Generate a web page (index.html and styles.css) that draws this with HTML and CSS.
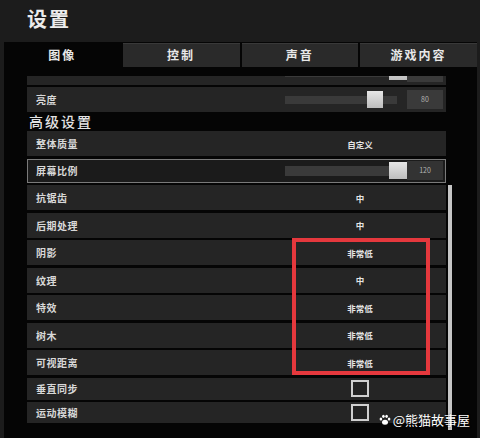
FILE: index.html
```html
<!DOCTYPE html>
<html lang="zh-CN">
<head>
    <meta charset="UTF-8">
    <meta name="viewport" content="width=device-width, initial-scale=1.0">
    <title>设置 - 图像</title>
    <link rel="stylesheet" href="styles.css">
</head>
<body>
    <header class="topbar">
        <h1>设置</h1>
    </header>
    <div class="main">
        <nav class="tabs">
            <div class="tab active">图像</div>
            <div class="tab">控制</div>
            <div class="tab">声音</div>
            <div class="tab">游戏内容</div>
        </nav>
        <div class="content">
            <div class="panel">
                <div class="list">
                    <!-- 위로 스크롤되어 잘린 행 -->
                    <div class="row">
                        <span class="label"></span>
                        <span class="slider full"><i class="knob" style="left:104px"></i></span>
                        <span class="box"></span>
                    </div>
                    <div class="row tight">
                        <span class="label">亮度</span>
                        <span class="slider"><i class="knob" style="left:82px"></i></span>
                        <span class="box gap">80</span>
                    </div>
                    <div class="section">高级设置</div>
                    <div class="row">
                        <span class="label">整体质量</span>
                        <span class="val">自定义</span>
                    </div>
                    <div class="row hl">
                        <span class="label">屏幕比例</span>
                        <span class="slider full"><i class="knob" style="left:104px"></i></span>
                        <span class="box">120</span>
                    </div>
                    <div class="row">
                        <span class="label">抗锯齿</span>
                        <span class="val">中</span>
                    </div>
                    <div class="row">
                        <span class="label">后期处理</span>
                        <span class="val">中</span>
                    </div>
                    <div class="row">
                        <span class="label">阴影</span>
                        <span class="val">非常低</span>
                    </div>
                    <div class="row">
                        <span class="label">纹理</span>
                        <span class="val">中</span>
                    </div>
                    <div class="row">
                        <span class="label">特效</span>
                        <span class="val">非常低</span>
                    </div>
                    <div class="row">
                        <span class="label">树木</span>
                        <span class="val">非常低</span>
                    </div>
                    <div class="row">
                        <span class="label">可视距离</span>
                        <span class="val">非常低</span>
                    </div>
                    <div class="row small">
                        <span class="label">垂直同步</span>
                        <span class="val"><i class="check"></i></span>
                    </div>
                    <div class="row small last">
                        <span class="label">运动模糊</span>
                        <span class="val"><i class="check"></i></span>
                    </div>
                </div>
                <div class="mark"></div>
            </div>
            <div class="scrollbar"></div>
        </div>
    </div>
    <div class="watermark">
        <svg class="paw" width="12" height="12" viewBox="0 0 24 24" fill="#fff">
            <ellipse cx="12" cy="16.5" rx="6" ry="5"/>
            <ellipse cx="3.8" cy="10" rx="2.6" ry="3"/>
            <ellipse cx="8.8" cy="4.6" rx="2.6" ry="3.2"/>
            <ellipse cx="15.2" cy="4.6" rx="2.6" ry="3.2"/>
            <ellipse cx="20.2" cy="10" rx="2.6" ry="3"/>
        </svg>
        <span>@熊猫故事屋</span>
    </div>
</body>
</html>
```

FILE: styles.css
```css
* {margin:0; padding:0; box-sizing:border-box;}
html, body {width:480px; height:438px; overflow:hidden;}
body {
    background:#1c1c1c; color:#ddd; position:relative;
    font-family:"Noto Sans CJK SC", "Noto Sans", sans-serif;
}
.topbar {height:42px; padding:6px 0 0 27px;}
.topbar h1 {font-size:20px; line-height:26px; font-weight:700; letter-spacing:2px; color:#ececec;}

.main {margin:0 3px 0 4px; height:396px; background:#050505;}
.tabs {display:grid; grid-template-columns:repeat(4, 1fr); gap:2px; height:25px; padding-top:1px;}
.tab {
    background:#2a2a2a; border-top:1px solid #393939; text-align:center;
    font-size:12px; line-height:22px; font-weight:700; letter-spacing:2px; color:#e8e8e8;
}
.tab.active {background:transparent; border-color:transparent;}

.content {display:flex; gap:2px; margin-top:9px; padding-left:23px; height:354px;}
.panel {position:relative; width:419px; height:354px; overflow:hidden;}
.list {margin-top:-16.5px;}

.row {
    display:flex; align-items:center; height:25px; margin-bottom:2.5px;
    padding-left:9px; background:#252525;
}
.row.tight {margin-bottom:0;}
.row.small {height:22px;}
.row.small.last {height:21px;}
.row.hl {height:24px; border:1px solid #7a7a7a; padding-left:8px; background:#1b1b1b;}
.row .label {flex:1; font-size:10px; font-weight:700; letter-spacing:0.5px; color:#d8d8d8;}
.row .val {
    display:flex; justify-content:center; width:150px; margin-right:11px;
    font-size:8.5px; font-weight:700; color:#e4e4e4;
}
.slider {position:relative; width:112px; height:8px; background:#3a3a3a;}
.slider.full {width:122px; height:10px;}
.knob {
    position:absolute; top:-5px; width:16px; height:17px;
    background:linear-gradient(#e6e6e6, #bdbdbd);
}
.slider.full .knob {top:-4px; width:18px; height:17px;}
.box {
    width:36px; height:19px; margin-right:3px; background:#3a3a3a;
    font-size:7px; line-height:19px; text-align:center; color:#b4b4b4;
}
.row.hl .box {margin-right:2px; background:#333;}
.box.gap {margin-left:10px;}
.check {width:18px; height:17px; border:2px solid #cfcfcf; background:#222;}

.section {
    height:19px; line-height:19px; padding-left:2px;
    font-size:14px; font-weight:500; letter-spacing:2px; color:#e2e2e2;
}
.mark {
    position:absolute; left:265px; top:162px; width:138px; height:137px;
    border:4px solid #e5383d;
}
.scrollbar {width:4px; height:245px; margin-top:109px; background:#c6c6c6;}

.watermark {
    position:absolute; right:10px; bottom:9px;
    display:flex; align-items:center; gap:2px;
    font-size:13px; line-height:18px; color:#fff; text-shadow:0 0 2px rgba(0,0,0,0.6);
}
```
